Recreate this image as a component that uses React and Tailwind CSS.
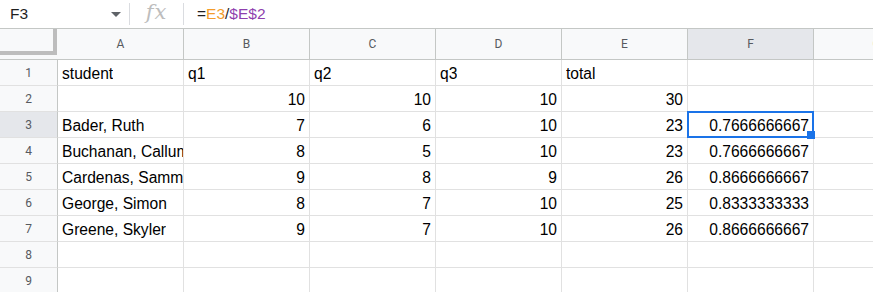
import { useState } from 'react';

const columns = ['A', 'B', 'C', 'D', 'E', 'F', 'G'];

const rows = [
  ['student', 'q1', 'q2', 'q3', 'total', ''],
  ['', 10, 10, 10, 30, ''],
  ['Bader, Ruth', 7, 6, 10, 23, '0.7666666667'],
  ['Buchanan, Callum', 8, 5, 10, 23, '0.7666666667'],
  ['Cardenas, Sammy', 9, 8, 9, 26, '0.8666666667'],
  ['George, Simon', 8, 7, 10, 25, '0.8333333333'],
  ['Greene, Skyler', 9, 7, 10, 26, '0.8666666667'],
  ['', '', '', '', '', ''],
  ['', '', '', '', '', ''],
];

const isNumber = (value) => value !== '' && !Number.isNaN(Number(value));

function FormulaBar() {
  return (
    <div className="flex h-[29px] items-center border-b border-[#c4c7c5] bg-white">
      <div className="flex w-[129px] items-center justify-between pl-[10px] pr-[8px] text-[15.5px] text-[#1f1f1f]">
        <span className="-mt-[1px]">F3</span>
        <svg width="10" height="5" viewBox="0 0 10 5" className="mt-[1px]">
          <path d="M0 0h10L5 5z" fill="#5f6368" />
        </svg>
      </div>
      <div className="h-[22px] w-px bg-[#dadce0]" />
      <div className="flex w-[53px] justify-center">
        <span className="-mt-[4px] font-['DejaVu_Serif',serif] text-[21px] italic leading-none tracking-[1px] text-[#bdbdbd]">
          fx
        </span>
      </div>
      <div className="h-[22px] w-px bg-[#dadce0]" />
      <div className="-mt-[1px] pl-[13px] text-[15.5px] text-[#1f1f1f]">
        =<span className="text-[#f39c2c]">E3</span>/<span className="text-[#8e3fae]">$E$2</span>
      </div>
    </div>
  );
}

export default function App() {
  const [selected] = useState({ row: 2, col: 5 });

  return (
    <div className="h-[292px] w-[873px] overflow-hidden bg-white font-['Liberation_Sans',Arial,sans-serif]">
      <FormulaBar />
      <div className="grid grid-cols-[58px_126px_126px_126px_126px_126px_126px_126px]">
        {/* corner with freeze handles */}
        <div className="h-[31px] border-b border-[#c4c7c5] bg-[#f8f9fa]">
          <div className="h-[26px] w-[57px] border-r-[4px] border-b-[4px] border-[#bdbdbd]" />
        </div>
        {columns.map((col, index) => (
          <div
            key={col}
            className={`flex h-[31px] items-center justify-center border-r border-b border-[#c4c7c5] font-['Roboto',sans-serif] text-[12px] text-[#575a5f] ${
              index === selected.col ? 'bg-[#e5e7eb]' : 'bg-[#f8f9fa]'
            }`}
          >
            {col}
          </div>
        ))}

        {rows.map((row, r) => (
          <div key={r} className="contents">
            <div
              className={`flex h-[26px] items-center justify-center border-r border-b border-r-[#c4c7c5] border-b-[#e1e1e1] font-['Roboto',sans-serif] text-[12px] text-[#575a5f] ${
                r === selected.row ? 'bg-[#e5e7eb]' : 'bg-[#f8f9fa]'
              }`}
            >
              {r + 1}
            </div>
            {[...row, ''].map((value, c) => (
              <div
                key={c}
                className={`relative flex h-[26px] items-end whitespace-nowrap border-r border-b border-[#e1e1e1] pb-0 text-[15.6px] text-black ${
                  isNumber(value) ? 'justify-end pr-[4px]' : 'justify-start pl-[4px]'
                } ${r === selected.row && c === selected.col ? 'z-10' : ''}`}
              >
                <span className="overflow-hidden">{value}</span>
                {r === selected.row && c === selected.col && (
                  <>
                    <div className="pointer-events-none absolute -left-[1px] -top-[1px] h-[27px] w-[127px] border-2 border-[#1a73e8]" />
                    <div className="absolute -right-[2px] -bottom-[2px] h-[8px] w-[8px] bg-[#1a73e8]" />
                  </>
                )}
              </div>
            ))}
          </div>
        ))}
      </div>
    </div>
  );
}
